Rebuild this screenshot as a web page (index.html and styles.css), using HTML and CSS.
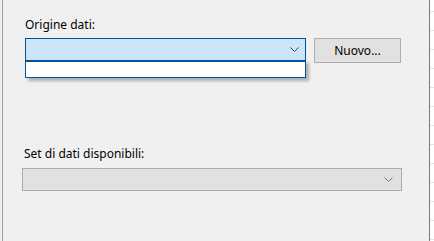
FILE: index.html
```html
<!DOCTYPE html>
<html>
<head>
<meta charset="utf-8">
<link rel="stylesheet" href="styles.css">
</head>
<body>
<div class="frame">
  <div class="panel">
    <div class="label first">Origine dati:</div>
    <div class="row">
      <div class="combo-wrap">
        <div class="combo focus">
          <svg class="chev" width="9" height="5" viewBox="0 0 9 5"><path d="M0.5 0.5 L4.5 4.5 L8.5 0.5" fill="none" stroke="#444" stroke-width="1"/></svg>
        </div>
        <div class="list"></div>
      </div>
      <button class="btn">Nuovo...</button>
    </div>
    <div class="label second">Set di dati disponibili:</div>
    <div class="combo disabled">
      <svg class="chev" width="9" height="5" viewBox="0 0 9 5"><path d="M0.5 0.5 L4.5 4.5 L8.5 0.5" fill="none" stroke="#777" stroke-width="1"/></svg>
    </div>
  </div>
  <div class="ruler"></div>
</div>
</body>
</html>
```
FILE: styles.css
```css
html, body {
  margin: 0;
  padding: 0;
  background: #f0f0f0;
  font-family: "Noto Sans", "Open Sans", sans-serif;
  font-size: 12px;
  color: #000;
}
.frame {
  display: flex;
  width: 434px;
  height: 241px;
  padding-left: 2px;
  box-sizing: border-box;
}
.panel {
  flex: 1;
  border-left: 1px solid #a0a0a0;
  border-right: 1px solid #7a7a7a;
  box-sizing: border-box;
  padding-left: 19px;
}
.ruler {
  width: 4px;
  background: #fff;
  background-image: repeating-linear-gradient(to bottom, transparent 0, transparent 11px, #e4e4e4 11px, #e4e4e4 12px, transparent 12px, transparent 19px);
}
.label {
  line-height: 16px;
  height: 16px;
}
.label.first {
  margin-top: 17px;
  padding-left: 3px;
  margin-bottom: 5px;
}
.label.second {
  margin-top: 83px;
  padding-left: 2px;
  margin-bottom: 6px;
}
.row {
  display: flex;
  align-items: flex-start;
  padding-left: 3px;
}
.combo-wrap {
  position: relative;
  width: 281px;
}
.combo {
  box-sizing: border-box;
  height: 22px;
  display: flex;
  align-items: center;
  justify-content: flex-end;
  padding-right: 6px;
}
.combo.focus {
  background: #cce4f7;
  border: 1px solid #005499;
  border-bottom: none;
}
.list {
  position: absolute;
  left: 0;
  top: 22px;
  width: 281px;
  height: 18px;
  box-sizing: border-box;
  background: #fff;
  border: 1px solid #005499;
  border-top-width: 2px;
  box-shadow: 3px 3px 3px rgba(0,0,0,0.28);
}
.btn {
  margin-left: 8px;
  width: 87px;
  height: 25px;
  box-sizing: border-box;
  background: #e1e1e1;
  border: 1px solid #adadad;
  font-family: "Noto Sans", "Open Sans", sans-serif;
  font-size: 12px;
  color: #000;
  padding: 0;
}
.combo.disabled {
  width: 380px;
  height: 23px;
  background: #e1e1e1;
  border: 1px solid #adadad;
  padding-right: 8px;
}
```
